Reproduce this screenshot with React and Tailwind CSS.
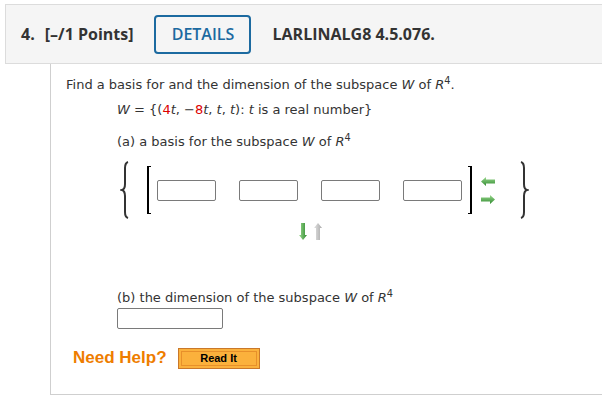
import React from 'react';

const Brace = ({ right }) => (
  <svg width="10" height="58" viewBox="0 0 10 58" className="shrink-0">
    <path
      d={right
        ? 'M2 1 Q5 2 5 7 L5 23 Q5 28 8 29 Q5 30 5 35 L5 51 Q5 56 2 57'
        : 'M8 1 Q5 2 5 7 L5 23 Q5 28 2 29 Q5 30 5 35 L5 51 Q5 56 8 57'}
      fill="none"
      stroke="#333"
      strokeWidth="2"
    />
  </svg>
);

const Bracket = ({ right }) => (
  <div
    className={`w-[4px] h-[48px] border-t border-b border-black ${right ? 'border-r-2' : 'border-l-2'}`}
  />
);

const HArrow = ({ dir }) => (
  <svg width="14" height="9" viewBox="0 0 14 9">
    <defs>
      <linearGradient id={`ha${dir}`} x1="0" x2="0" y1="0" y2="1">
        <stop offset="0" stopColor="#9bd98f" />
        <stop offset="1" stopColor="#2f8a2f" />
      </linearGradient>
    </defs>
    <polygon
      points={dir === 'left' ? '0,4.5 5,0 5,2.5 14,2.5 14,6.5 5,6.5 5,9' : '14,4.5 9,0 9,2.5 0,2.5 0,6.5 9,6.5 9,9'}
      fill={`url(#ha${dir})`}
    />
  </svg>
);

const VArrow = ({ dir, gray }) => (
  <svg width="8" height="17" viewBox="0 0 8 17">
    <defs>
      <linearGradient id={`va${dir}`} x1="0" x2="1" y1="0" y2="0">
        <stop offset="0" stopColor={gray ? '#e2e2e2' : '#9bd98f'} />
        <stop offset="1" stopColor={gray ? '#a9a9a9' : '#2f8a2f'} />
      </linearGradient>
    </defs>
    <polygon
      points={dir === 'down' ? '4,17 0,12 2,12 2,0 6,0 6,12 8,12' : '4,0 0,5 2,5 2,17 6,17 6,5 8,5'}
      fill={`url(#va${dir})`}
    />
  </svg>
);

const Box = ({ w = 'w-[59px]' }) => (
  <div className={`${w} h-[21px] border border-[#7a7a7a] rounded-[2px] bg-white`} />
);

export default function App() {
  return (
    <div className="w-[602px] h-[410px] bg-white overflow-hidden pt-[4px] pl-[5px]">
      {/* header */}
      <div className="h-[60px] w-[597px] border border-r-0 border-[#dcdcdc] bg-[#f5f5f5] flex items-center pl-[15px] font-['Open_Sans',sans-serif] text-[#333] text-[16px] font-bold">
        <span>4.</span>
        <span className="ml-[10px]">[–/1 Points]</span>
        <div className="ml-[21px] w-[97px] h-[39px] border-2 border-[#1c6aa0] rounded-[4px] flex items-center justify-center text-[#1c6aa0] font-semibold">
          DETAILS
        </div>
        <span className="ml-[21px]">LARLINALG8 4.5.076.</span>
      </div>

      {/* question panel */}
      <div className="ml-[45px] w-[560px] h-[331px] border-l border-b border-[#cfcfcf] pt-[11px] pl-[15px] font-['DejaVu_Sans',sans-serif] text-[13px] text-[#333]">
        <div className="h-[20px] leading-[20px]">
          Find a basis for and the dimension of the subspace <i>W</i> of <i>R</i><sup>4</sup>.
        </div>
        <div className="ml-[51px] mt-[5px] h-[20px] leading-[20px]">
          <i>W</i> = {'{'}(<span className="text-[#d00]">4</span><i>t</i>, −<span className="text-[#d00]">8</span><i>t</i>, <i>t</i>, <i>t</i>): <i>t</i> is a real number{'}'}
        </div>
        <div className="ml-[51px] mt-[12px] h-[20px] leading-[20px]">
          (a) a basis for the subspace <i>W</i> of <i>R</i><sup>4</sup>
        </div>

        {/* basis matrix */}
        <div className="ml-[54px] mt-[8px] h-[60px] flex items-center">
          <Brace />
          <div className="ml-[17px] flex items-center">
            <Bracket />
            <div className="ml-[6px] flex items-center gap-[23px]">
              <Box />
              <Box />
              <Box />
              <Box />
            </div>
            <div className="ml-[6px]">
              <Bracket right />
            </div>
            <div className="ml-[9px] flex flex-col gap-[9px]">
              <HArrow dir="left" />
              <HArrow dir="right" />
            </div>
          </div>
          <div className="ml-[24px]">
            <Brace right />
          </div>
        </div>
        <div className="mt-[2px] h-[18px] flex items-center gap-[7px] pl-[233px]">
          <VArrow dir="down" />
          <VArrow dir="up" gray />
        </div>

        <div className="ml-[51px] mt-[48px] h-[20px] leading-[20px]">
          (b) the dimension of the subspace <i>W</i> of <i>R</i><sup>4</sup>
        </div>
        <div className="ml-[51px]">
          <Box w="w-[106px]" />
        </div>

        <div className="ml-[7px] mt-[18px] h-[22px] flex items-center font-['Liberation_Sans',sans-serif]">
          <span className="text-[#ee7d00] text-[17px] font-bold">Need Help?</span>
          <div className="ml-[11px] w-[82px] h-[21px] border border-[#c9782a] bg-[#fbb13c] p-[2px]">
            <div className="w-full h-full border border-[#e8902a] flex items-center justify-center text-[11px] font-bold text-black">
              Read It
            </div>
          </div>
        </div>
      </div>
    </div>
  );
}
